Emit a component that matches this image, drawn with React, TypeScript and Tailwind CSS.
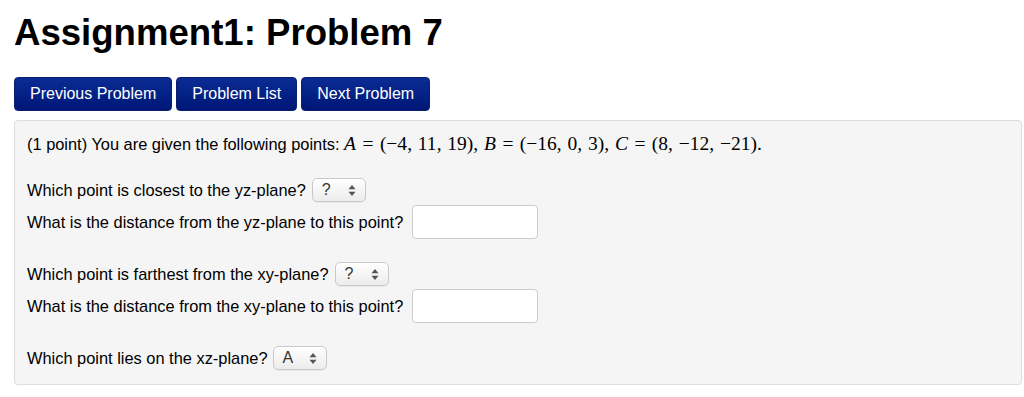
import { ReactNode } from 'react'

function NavButton({ children }: { children: ReactNode }) {
  return (
    <button className="h-[34px] px-[15px] rounded-[4px] border border-[#0b1f6e] bg-gradient-to-b from-[#0c2c94] to-[#001677] text-white text-[16px] leading-none">
      {children}
    </button>
  )
}

function FakeSelect({ value }: { value: string }) {
  return (
    <span className="inline-flex items-center justify-between w-[54px] h-[24px] pl-[9px] pr-[9px] rounded-[5px] border border-[#c9c9c9] bg-gradient-to-b from-white to-[#ececec] text-[16px] text-[#333] shadow-[0_1px_0_rgba(0,0,0,0.05)]">
      <span>{value}</span>
      <svg width="8" height="13" viewBox="0 0 8 13" className="text-[#555]">
        <path d="M4 1 L7.5 5.2 L0.5 5.2 Z" fill="currentColor" />
        <path d="M4 12 L7.5 7.8 L0.5 7.8 Z" fill="currentColor" />
      </svg>
    </span>
  )
}

function TextBox() {
  return <span className="inline-block w-[126px] h-[34px] rounded-[4px] border border-[#cccccc] bg-white" />
}

// math helpers: variable, relation, comma
function V({ children }: { children: ReactNode }) {
  return <i>{children}</i>
}
function Eq() {
  return <span className="mx-[0.33em]">=</span>
}
function C() {
  return <span className="mr-[0.3em]">,</span>
}

export default function App() {
  return (
    <div className="w-[1024px] h-[397px] bg-white px-[14px] pt-[11px] text-black font-['Liberation_Sans',Arial,sans-serif]">
      {/* Title */}
      <h1 className="text-[36.6px] font-bold leading-[44px]">Assignment1: Problem 7</h1>

      {/* Navigation */}
      <div className="flex gap-[4px] mt-[22px]">
        <NavButton>Previous Problem</NavButton>
        <NavButton>Problem List</NavButton>
        <NavButton>Next Problem</NavButton>
      </div>

      {/* Problem panel */}
      <div className="mt-[9px] w-[1008px] rounded-[4px] border border-[#dddddd] bg-[#f5f5f5] pl-[12px] pt-[13px] pb-[11px] text-[16.4px] leading-[20px]">
        <p className="h-[20px] flex items-center whitespace-pre">
          <span>(1 point) You are given the following points: </span>
          <span className="font-['Liberation_Serif','Times_New_Roman',serif] text-[19.5px]">
            <V>A</V>
            <Eq />(−4<C />11<C />19)<C />
            <V>B</V>
            <Eq />(−16<C />0<C />3)<C />
            <V>C</V>
            <Eq />(8<C />−12<C />−21).
          </span>
        </p>

        <div className="mt-[21px]">
          <div className="h-[30px] flex items-center gap-[6px]">
            <span>Which point is closest to the yz-plane?</span>
            <FakeSelect value="?" />
          </div>
          <div className="h-[34px] flex items-center gap-[9px]">
            <span>What is the distance from the yz-plane to this point?</span>
            <TextBox />
          </div>
        </div>

        <div className="mt-[20px]">
          <div className="h-[30px] flex items-center gap-[6px]">
            <span>Which point is farthest from the xy-plane?</span>
            <FakeSelect value="?" />
          </div>
          <div className="h-[34px] flex items-center gap-[9px]">
            <span>What is the distance from the xy-plane to this point?</span>
            <TextBox />
          </div>
        </div>

        <div className="mt-[20px] h-[30px] flex items-center gap-[5px]">
          <span>Which point lies on the xz-plane?</span>
          <FakeSelect value="A" />
        </div>
      </div>
    </div>
  )
}
